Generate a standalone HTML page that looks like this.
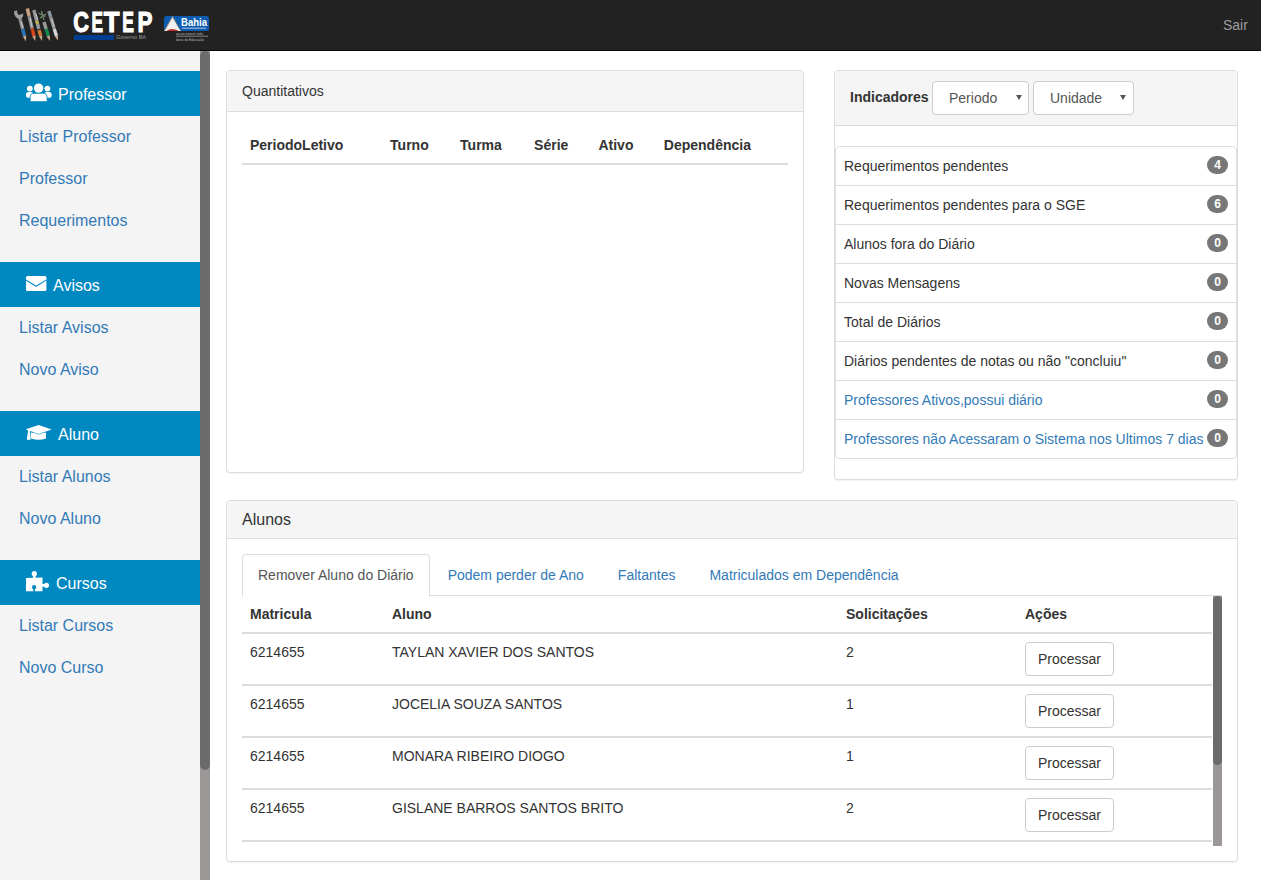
<!DOCTYPE html>
<html><head><meta charset="utf-8">
<style>
*{box-sizing:border-box;}
html,body{margin:0;padding:0;width:1261px;height:880px;overflow:hidden;background:#fff;}
body{font-family:"Liberation Sans",sans-serif;font-size:14px;line-height:20px;color:#333;position:relative;}
a{color:#337ab7;text-decoration:none;}
#nav{position:absolute;left:0;top:0;width:1261px;height:51px;background:#222;border-bottom:1px solid #080808;}
#sair{position:absolute;left:1223px;top:15px;color:#9d9d9d;font-size:14px;line-height:20px;}
#side{position:absolute;left:0;top:51px;width:200px;height:829px;background:#f4f4f4;}
#sbar{position:absolute;left:200px;top:51px;width:10px;height:829px;background:#9b9796;}
#sthumb{position:absolute;left:200px;top:51px;width:10px;height:719px;background:#6b6b6b;border-radius:5px;}
.sh{position:absolute;left:0;width:200px;height:45px;background:#0089c1;color:#fff;font-size:16px;line-height:20px;}
.sh svg{position:absolute;left:26px;}
.sh span{position:absolute;top:14px;}
.si{position:absolute;margin-top:1px;left:19px;font-size:16px;line-height:20px;color:#337ab7;}
.panel{position:absolute;background:#fff;border:1px solid #ddd;border-radius:4px;box-shadow:0 1px 1px rgba(0,0,0,.05);}
.ph{background:#f5f5f5;border-bottom:1px solid #ddd;border-radius:3px 3px 0 0;padding:10px 15px;}
table{border-collapse:collapse;border-spacing:0;}
th{text-align:left;font-weight:bold;}
.t1{width:100%;}
.t1 th{padding:8px;border-bottom:2px solid #ddd;line-height:20px;}
.lg{position:absolute;left:0;top:20px;width:402px;}
.li{position:relative;height:40px;border:1px solid #ddd;margin-bottom:-1px;padding:9px 9px 9px 9px;line-height:20px;}
.li:first-child{border-radius:4px 4px 0 0;}
.li:last-child{border-radius:0 0 4px 4px;}
.li .tx{position:absolute;left:8px;top:9px;white-space:nowrap;}
.badge{position:absolute;right:8px;top:9px;height:18px;min-width:10px;padding:3px 7px;font-size:12px;font-weight:bold;line-height:12px;color:#fff;background:#777;border-radius:10px;text-align:center;}
.sel{position:absolute;top:10px;height:34px;background:#fff;border:1px solid #ccc;border-radius:4px;color:#555;font-size:14px;line-height:20px;padding:6px 0 6px 16px;}
.sel i{position:absolute;top:13px;width:0;height:0;border-left:3px solid transparent;border-right:3px solid transparent;border-top:5px solid #555;font-style:normal;}
.tabs{position:absolute;left:15px;top:15px;height:42px;width:980px;border-bottom:1px solid #ddd;white-space:nowrap;}
.tab{display:inline-block;vertical-align:top;height:42px;margin-right:2px;padding:10px 15px;border:1px solid transparent;border-radius:4px 4px 0 0;color:#337ab7;line-height:20px;}
.tab.act{border-color:#ddd #ddd transparent;background:#fff;color:#555;height:43px;}
.tab + .tab{}
.t2wrap{position:absolute;left:15px;top:57px;width:980px;height:250px;overflow:hidden;}
.t2{width:970px;table-layout:fixed;}
.t2 th{padding:8px;border-bottom:2px solid #ddd;line-height:20px;}
.t2 td{padding:8px;border-top:2px solid #ddd;vertical-align:top;line-height:20px;}
.btn{display:inline-block;height:34px;padding:6px 12px;border:1px solid #ccc;border-radius:4px;background:#fff;color:#333;line-height:20px;}
.vbar{position:absolute;left:971px;top:0;width:9px;height:250px;background:#9b9796;}
.vthumb{position:absolute;left:971px;top:0;width:9px;height:169px;background:#6b6b6b;border-radius:4.5px;}
</style></head>
<body>
<div id="nav">
  <svg width="220" height="50" style="position:absolute;left:0;top:0">
    <!-- tools -->
<path d="M17.9 17.4 L21.0 29.4 L24.3 28.6 L21.1 16.6 Z" fill="#8f8f8f"/>
<path d="M21.0 29.4 L22.9 36.4 L26.2 35.6 L24.3 28.6 Z" fill="#2a74b8"/>
<path d="M22.9 36.4 L26.0 41.5 L26.2 35.6 Z" fill="#c9a98c"/>
<path d="M25.6 8.9 L27.5 16.4 L30.8 15.6 L29.0 8.1 Z" fill="#c9a283"/>
<path d="M27.5 16.4 L30.6 29.4 L33.9 28.6 L30.8 15.6 Z" fill="#8f8f8f"/>
<path d="M30.4 28.4 L30.9 30.4 L34.2 29.6 L33.7 27.6 Z" fill="#c0502a"/>
<path d="M30.9 30.4 L32.3 36.4 L35.6 35.6 L34.2 29.6 Z" fill="#d8461b"/>
<path d="M32.3 36.4 L35.2 41.0 L35.6 35.6 Z" fill="#c9a98c"/>
<path d="M32.2 10.4 L37.2 29.4 L40.5 28.6 L35.4 9.6 Z" fill="#999"/>
<path d="M37.4 30.4 L39.0 36.4 L42.3 35.6 L40.7 29.6 Z" fill="#d27a34"/>
<path d="M39.0 36.4 L42.0 41.0 L42.3 35.6 Z" fill="#c9a98c"/>
<path d="M42.4 22.5 L44.5 29.5 L47.8 28.5 L45.6 21.5 Z" fill="#9a9a9a"/>
<path d="M44.5 29.5 L46.6 36.5 L49.9 35.5 L47.8 28.5 Z" fill="#16894a"/>
<path d="M46.6 36.5 L49.8 41.0 L49.9 35.5 Z" fill="#c9a98c"/>
<path d="M47.2 11.5 L49.0 17.5 L52.3 16.5 L50.4 10.5 Z" fill="#8796a3"/>
<path d="M49.0 17.5 L52.7 29.5 L55.9 28.5 L52.3 16.5 Z" fill="#949494"/>
<path d="M52.7 29.5 L54.8 36.5 L58.1 35.5 L55.9 28.5 Z" fill="#d6d6d6"/>
<path d="M54.8 36.5 L57.8 40.5 L58.1 35.5 Z" fill="#c9a98c"/>
<path d="M14.2 11 Q13.2 16 18 18.8 L21.5 18.5 Q23.8 16.5 23.2 13.5 L21 14.2 Q19.5 15.5 18.2 14.6 Q16.8 13.2 17.2 10.5 Z" fill="#9d9d9d"/>
<circle cx="37.2" cy="22.3" r="1.5" fill="#c8b62c"/>
<path d="M38.5 13 L45.5 16.5 M41.5 11 L44 20 M40 18 L46 14" stroke="#6f9168" stroke-width="1.1" fill="none"/>
<path d="M21 22 L23 28 M30 18 L32 27 M36 14 L38 20 M52 19 L54 27" stroke="#f0f0f0" stroke-width="0.9" opacity="0.7"/>

    <text x="73.3" y="32.2" fill="#fff" stroke="#fff" stroke-width="1.2" font-family="Liberation Sans" font-weight="bold" font-size="30" textLength="15.7" lengthAdjust="spacingAndGlyphs">C</text><text x="91.5" y="32.2" fill="#fff" stroke="#fff" stroke-width="1.2" font-family="Liberation Sans" font-weight="bold" font-size="30" textLength="11.5" lengthAdjust="spacingAndGlyphs">E</text><text x="103.7" y="32.2" fill="#fff" stroke="#fff" stroke-width="1.2" font-family="Liberation Sans" font-weight="bold" font-size="30" textLength="15.7" lengthAdjust="spacingAndGlyphs">T</text><text x="122.3" y="32.2" fill="#fff" stroke="#fff" stroke-width="1.2" font-family="Liberation Sans" font-weight="bold" font-size="30" textLength="11.7" lengthAdjust="spacingAndGlyphs">E</text><text x="137.6" y="32.2" fill="#fff" stroke="#fff" stroke-width="1.2" font-family="Liberation Sans" font-weight="bold" font-size="30" textLength="15.0" lengthAdjust="spacingAndGlyphs">P</text>
    <rect x="74" y="35" width="40" height="5" fill="#003e92"/>
    <text x="116" y="39.3" fill="#9a9a9a" font-family="Liberation Sans" font-size="5.5" textLength="30" lengthAdjust="spacingAndGlyphs">Governo BA</text>
    <rect x="164" y="16" width="45" height="15" rx="2.5" fill="#0b5bb0"/>
    <path d="M164 31 L172.5 16 L181 31 Z" fill="#f0f0f0"/>
    <path d="M164.5 30.5 L172.5 16.5 L180.5 30.5" fill="none" stroke="#666" stroke-width="0.9"/>
    <path d="M167 30.5 Q172 27.5 178 30.5 L178 31 L167 31 Z" fill="#c42a2a"/>
    <text x="181" y="26.3" fill="#fff" font-family="Liberation Sans" font-weight="bold" font-size="11" textLength="26" lengthAdjust="spacingAndGlyphs">Bahia</text>
    <rect x="182" y="27.5" width="24" height="1.5" fill="#7fa8d8"/>
    <text x="176" y="34.5" fill="#bbb" font-family="Liberation Sans" font-size="3.5" textLength="27" lengthAdjust="spacingAndGlyphs">ao ao nascer sola</text>
    <rect x="176" y="35.8" width="32" height="0.7" fill="#aaa"/>
    <text x="176" y="40.8" fill="#bbb" font-family="Liberation Sans" font-size="4" textLength="28" lengthAdjust="spacingAndGlyphs">daria da Educação</text>
  </svg>
  <a id="sair">Sair</a>
</div>

<div id="side">
  <div class="sh" style="top:20px">
    <svg width="27" height="19" style="top:12px" viewBox="0 0 27 19">
      <circle cx="3.85" cy="5.55" r="2.9" fill="#fff"/><circle cx="21.4" cy="5.55" r="2.9" fill="#fff"/>
      <rect x="-0.2" y="9" width="7.6" height="5.8" rx="2.9" fill="#fff"/><rect x="18.1" y="9" width="7.6" height="5.8" rx="2.9" fill="#fff"/>
      <path d="M4.1 18.1 L4.1 14.6 Q4.1 10.2 8.5 10.2 L16.7 10.2 Q21.1 10.2 21.1 14.6 L21.1 18.1 Q21.1 18.7 20.4 18.7 L4.8 18.7 Q4.1 18.7 4.1 18.1Z" fill="#fff" stroke="#0089c1" stroke-width="0.9"/>
      <circle cx="12.6" cy="5.1" r="4.7" fill="#fff"/>
    </svg>
    <span style="left:58px">Professor</span>
  </div>
  <a class="si" style="top:75px">Listar Professor</a>
  <a class="si" style="top:117px">Professor</a>
  <a class="si" style="top:159px">Requerimentos</a>

  <div class="sh" style="top:211px">
    <svg width="21" height="15" style="top:14px" viewBox="0 0 21 15">
      <rect x="0" y="0" width="20.4" height="15" rx="1.5" fill="#fff"/>
      <path d="M-0.2 3.9 L10.2 10.3 L20.6 3.9" fill="none" stroke="#0089c1" stroke-width="1.1" stroke-linejoin="round"/>
    </svg>
    <span style="left:53px">Avisos</span>
  </div>
  <a class="si" style="top:266px">Listar Avisos</a>
  <a class="si" style="top:308px">Novo Aviso</a>

  <div class="sh" style="top:360px">
    <svg width="27" height="17" style="top:13px" viewBox="0 0 27 17">
      <path d="M5 8.6 L5 14.4 Q12.6 17.3 20 14.4 L20 8.6 Z" fill="#fff"/>
      <path d="M-0.2 5.4 L12.6 1 L25.6 5.4 L12.6 10 Z" fill="#fff" stroke="#0089c1" stroke-width="1.1" stroke-linejoin="round"/>
      <path d="M-0.2 5.4 L12.6 1 L25.6 5.4 L12.6 9.9 Z" fill="#fff"/>
      <path d="M2.2 6 L3.9 6 L4.7 15.8 L0.8 15.8 Z" fill="#fff"/>
    </svg>
    <span style="left:58px">Aluno</span>
  </div>
  <a class="si" style="top:415px">Listar Alunos</a>
  <a class="si" style="top:457px">Novo Aluno</a>

  <div class="sh" style="top:509px">
    <svg width="26" height="23" style="top:10px" viewBox="0 0 26 23">
      <path d="M-0.1 7.9 L16.5 7.4 L16.5 21.3 L-0.1 21.3 Z" fill="#fff"/>
      <circle cx="8.3" cy="3.7" r="2.6" fill="#fff"/><rect x="7" y="5" width="2.6" height="3.5" fill="#fff"/>
      <circle cx="20.4" cy="15.3" r="2.6" fill="#fff"/><rect x="16" y="14" width="3" height="2.6" fill="#fff"/>
      <circle cx="8.1" cy="17.2" r="2.1" fill="#0089c1"/><rect x="7.2" y="17.5" width="1.8" height="4" fill="#0089c1"/>
    </svg>
    <span style="left:56px">Cursos</span>
  </div>
  <a class="si" style="top:564px">Listar Cursos</a>
  <a class="si" style="top:606px">Novo Curso</a>
</div>
<div id="sbar"></div><div id="sthumb"></div>

<!-- Quantitativos -->
<div class="panel" style="left:226px;top:70px;width:578px;height:403px;">
  <div class="ph">Quantitativos</div>
  <div style="padding:15px;">
    <table class="t1"><thead><tr><th>PeriodoLetivo</th><th>Turno</th><th>Turma</th><th>Série</th><th>Ativo</th><th>Dependência</th></tr></thead></table>
  </div>
</div>

<!-- Indicadores -->
<div class="panel" style="left:834px;top:70px;width:404px;height:410px;">
  <div class="ph" style="height:55px;position:relative;">
    <b style="position:absolute;left:15px;top:16px;">Indicadores</b>
    <div class="sel" style="left:97px;width:97px;">Periodo<i style="left:83px"></i></div>
    <div class="sel" style="left:198px;width:101px;">Unidade<i style="left:86px"></i></div>
  </div>
  <div style="position:relative;">
    <div class="lg">
      <div class="li"><span class="tx">Requerimentos pendentes</span><span class="badge">4</span></div>
      <div class="li"><span class="tx">Requerimentos pendentes para o SGE</span><span class="badge">6</span></div>
      <div class="li"><span class="tx">Alunos fora do Diário</span><span class="badge">0</span></div>
      <div class="li"><span class="tx">Novas Mensagens</span><span class="badge">0</span></div>
      <div class="li"><span class="tx">Total de Diários</span><span class="badge">0</span></div>
      <div class="li"><span class="tx">Diários pendentes de notas ou não "concluiu"</span><span class="badge">0</span></div>
      <div class="li"><a class="tx">Professores Ativos,possui diário</a><span class="badge">0</span></div>
      <div class="li"><a class="tx">Professores não Acessaram o Sistema nos Ultimos 7 dias</a><span class="badge">0</span></div>
    </div>
  </div>
</div>

<!-- Alunos -->
<div class="panel" style="left:226px;top:500px;width:1012px;height:362px;">
  <div class="ph" style="height:38px;font-size:16px;line-height:17px;padding:10px 15px 10px;">Alunos</div>
  <div style="position:relative;">
    <div class="tabs"><span class="tab act">Remover Aluno do Diário</span><span class="tab">Podem perder de Ano</span><span class="tab">Faltantes</span><span class="tab">Matriculados em Dependência</span></div>
    <div class="t2wrap">
      <table class="t2">
        <colgroup><col style="width:142px"><col style="width:454px"><col style="width:179px"><col style="width:195px"></colgroup>
        <thead><tr><th>Matricula</th><th>Aluno</th><th>Solicitações</th><th>Ações</th></tr></thead>
        <tbody>
          <tr><td>6214655</td><td>TAYLAN XAVIER DOS SANTOS</td><td>2</td><td><span class="btn">Processar</span></td></tr>
          <tr><td>6214655</td><td>JOCELIA SOUZA SANTOS</td><td>1</td><td><span class="btn">Processar</span></td></tr>
          <tr><td>6214655</td><td>MONARA RIBEIRO DIOGO</td><td>1</td><td><span class="btn">Processar</span></td></tr>
          <tr><td>6214655</td><td>GISLANE BARROS SANTOS BRITO</td><td>2</td><td><span class="btn">Processar</span></td></tr>
          <tr><td>6214655</td><td>X</td><td>1</td><td><span class="btn">Processar</span></td></tr>
        </tbody>
      </table>
      <div class="vbar"></div><div class="vthumb"></div>
    </div>
  </div>
</div>
</body></html>
